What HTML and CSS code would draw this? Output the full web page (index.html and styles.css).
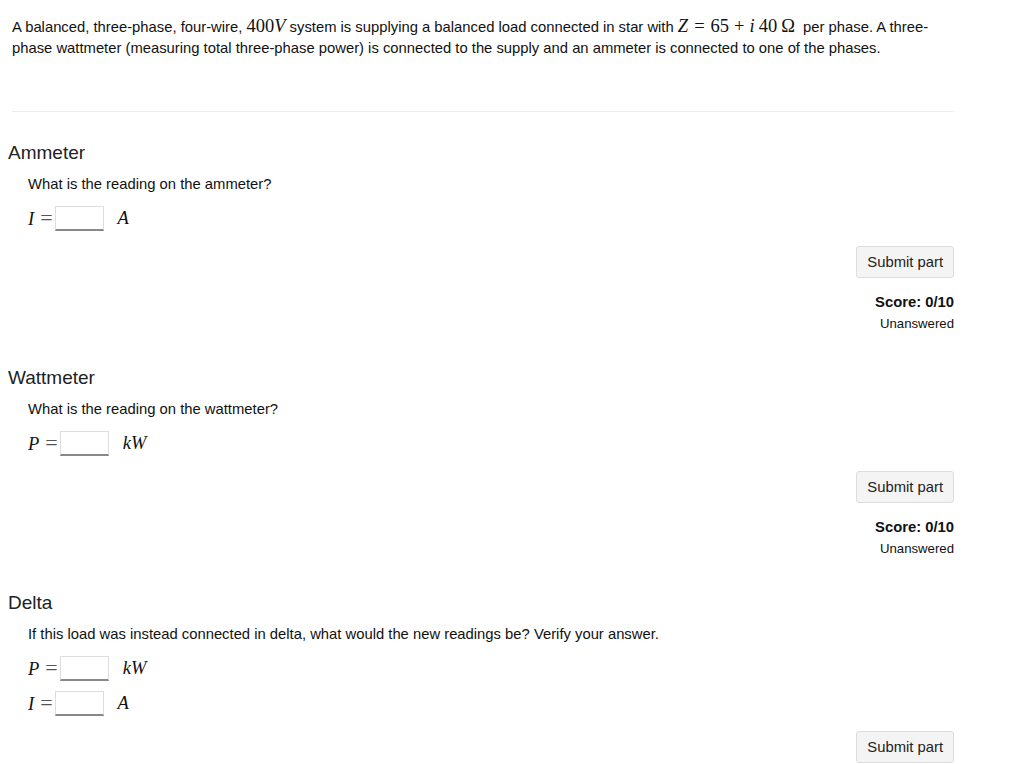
FILE: index.html
```html
<!DOCTYPE html>
<html lang="en">
<head>
    <meta charset="UTF-8">
    <title>Three-phase power</title>
    <link rel="stylesheet" href="styles.css">
</head>
<body>

  <div id="question">

    <!-- Statement -->
    <div class="statement">
      A balanced, three-phase, four-wire, <span class="math"><span class="num">400</span><span class="var">V</span></span>
      system is supplying a balanced load connected in star with
      <span class="math"><span class="var">Z</span><span class="rel">=</span><span class="num">65</span><span class="bin">+</span><span class="var">i</span><span class="thin"></span><span class="num">40</span><span class="thin"></span><span class="num">Ω</span></span>&nbsp;
      per phase. A three-phase wattmeter (measuring total three-phase power) is connected to the supply and an ammeter is connected to one of the phases.
    </div>

    <hr>

    <!-- Part a -->
    <div class="part">
      <h3>Ammeter</h3>
      <p class="prompt">What is the reading on the ammeter?</p>
      <div class="answer-row">
        <span class="math"><span class="var">I</span><span class="eq">=</span></span><input type="text" class="answer"><span class="unit math"><span class="var">A</span></span>
      </div>
      <div class="submit">
        <button>Submit part</button>
        <div class="score">Score: 0/10</div>
        <div class="status">Unanswered</div>
      </div>
    </div>

    <!-- Part b -->
    <div class="part">
      <h3>Wattmeter</h3>
      <p class="prompt">What is the reading on the wattmeter?</p>
      <div class="answer-row">
        <span class="math"><span class="var">P</span><span class="eq">=</span></span><input type="text" class="answer"><span class="unit math"><span class="var">kW</span></span>
      </div>
      <div class="submit">
        <button>Submit part</button>
        <div class="score">Score: 0/10</div>
        <div class="status">Unanswered</div>
      </div>
    </div>

    <!-- Part c -->
    <div class="part">
      <h3>Delta</h3>
      <p class="prompt">If this load was instead connected in delta, what would the new readings be? Verify your answer.</p>
      <div class="answer-row">
        <span class="math"><span class="var">P</span><span class="eq">=</span></span><input type="text" class="answer"><span class="unit math"><span class="var">kW</span></span>
      </div>
      <div class="answer-row second">
        <span class="math"><span class="var">I</span><span class="eq">=</span></span><input type="text" class="answer"><span class="unit math"><span class="var">A</span></span>
      </div>
      <div class="submit">
        <button>Submit part</button>
        <div class="score">Score: 0/10</div>
        <div class="status">Unanswered</div>
      </div>
    </div>

  </div>

</body>
</html>
```

FILE: styles.css
```css
/* Global */
body {
    margin: 0;
    font-family: "Liberation Sans", Arial, sans-serif;
    font-size: 14.8px;
    color: #111;
    background: #fff;
}
#question { width: 946px; padding-left: 8px; }

/* Statement */
.statement {
    padding: 17px 0 0 4px;
    line-height: 21px;
}
hr {
    margin: 52px 0 0 4px;
    border: none;
    border-top: 1px solid #eee;
}

/* Math */
.math { font-family: "Liberation Serif", "Times New Roman", serif; font-size: 18.5px; line-height: 1; }
.math .var { font-style: italic; }
.math .rel { margin: 0 6px; }
.math .bin { margin: 0 5px; }
.math .thin { display: inline-block; width: 4px; }
.math .eq { color: #555; margin: 0 2px 0 6px; font-size: 22px; }

/* Parts */
.part { margin-top: 29px; }
.part + .part { margin-top: 31px; }
.part h3 {
    margin: 0;
    font-size: 19px;
    font-weight: normal;
    line-height: 24px;
    color: #222;
}
.prompt { margin: 9px 0 0 20px; line-height: 20px; }

.answer-row {
    display: flex;
    align-items: center;
    margin: 11px 0 0 20px;
    height: 26px;
}
.answer-row.second { margin-top: 9px; }
.answer {
    width: 49px;
    height: 25px;
    box-sizing: border-box;
    margin: 0;
    padding: 0 4px;
    border: 1px solid #ddd;
    border-bottom: 2px solid #888;
    font-size: 14px;
}
.unit { margin-left: 14px; }

/* Submit */
.submit {
    display: flex;
    flex-direction: column;
    align-items: flex-end;
    margin-top: 15px;
}
button {
    height: 32px;
    padding: 0 10px;
    font-family: inherit;
    font-size: 14.8px;
    color: #222;
    background: #f4f4f4;
    border: 1px solid #ddd;
    border-radius: 3px;
}
.score { margin-top: 13px; font-weight: bold; line-height: 22px; }
.status { font-size: 13.2px; line-height: 22px; }
```
